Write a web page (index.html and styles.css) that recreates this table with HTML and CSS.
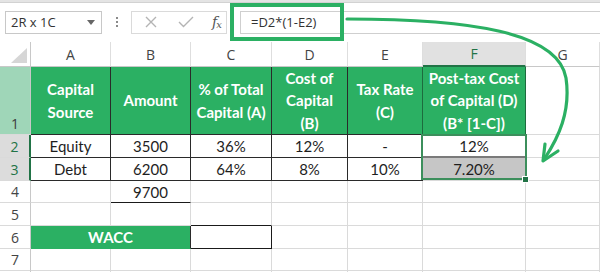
FILE: index.html
```html
<!DOCTYPE html>
<html lang="en">
<head>
<meta charset="utf-8">
<title>WACC worksheet</title>
<link rel="stylesheet" href="styles.css">
</head>
<body>
<div class="app">
  <div class="top-strip"></div>

  <div class="formula-bar">
    <div class="name-box">
      <span>2R x 1C</span>
      <svg class="caret" width="8" height="5" viewBox="0 0 8 5"><path d="M0 0h8L4 5z" fill="#666"/></svg>
    </div>
    <div class="grip"><i></i><i></i><i></i></div>
    <div class="fn-box">
      <svg class="fn-icon" width="14" height="12" viewBox="0 0 14 12"><path d="M2 1l10 10M12 1L2 11" stroke="#b4b4b4" stroke-width="1.4" fill="none"/></svg>
      <svg class="fn-icon" width="16" height="12" viewBox="0 0 16 12"><path d="M1 6l4.5 4.5L15 1" stroke="#b4b4b4" stroke-width="1.4" fill="none"/></svg>
      <span class="fx">f<sub>x</sub></span>
    </div>
    <div class="formula-input">=D2*(1-E2)</div>
  </div>

  <div class="grid">
    <!-- column headers -->
    <div class="c corner"><svg width="16" height="15" viewBox="0 0 16 15"><path d="M16 0v15H0z" fill="#d6d6d6"/></svg></div>
    <div class="c ch">A</div>
    <div class="c ch">B</div>
    <div class="c ch">C</div>
    <div class="c ch">D</div>
    <div class="c ch">E</div>
    <div class="c ch ch-sel">F</div>
    <div class="c ch">G</div>

    <!-- row 1 -->
    <div class="c rh rh-green">1</div>
    <div class="c hd dk">Capital<br>Source</div>
    <div class="c hd dk">Amount</div>
    <div class="c hd dk">% of Total<br>Capital (A)</div>
    <div class="c hd dk">Cost of<br>Capital<br>(B)</div>
    <div class="c hd dk">Tax Rate<br>(C)</div>
    <div class="c hd dk f-head">Post-tax Cost<br>of Capital (D)<br>(B* [1-C])</div>
    <div class="c"></div>

    <!-- row 2 -->
    <div class="c rh rh-sel">2</div>
    <div class="c dk">Equity</div>
    <div class="c dk">3500</div>
    <div class="c dk">36%</div>
    <div class="c dk">12%</div>
    <div class="c dk">-</div>
    <div class="c f-active">12%</div>
    <div class="c"></div>

    <!-- row 3 -->
    <div class="c rh rh-sel">3</div>
    <div class="c dk">Debt</div>
    <div class="c dk">6200</div>
    <div class="c dk">64%</div>
    <div class="c dk">8%</div>
    <div class="c dk">10%</div>
    <div class="c f-shade">7.20%</div>
    <div class="c"></div>

    <!-- row 4 -->
    <div class="c rh">4</div>
    <div class="c"></div>
    <div class="c total">9700</div>
    <div class="c"></div>
    <div class="c"></div>
    <div class="c"></div>
    <div class="c"></div>
    <div class="c"></div>

    <!-- row 5 -->
    <div class="c rh">5</div>
    <div class="c"></div>
    <div class="c"></div>
    <div class="c above-box"></div>
    <div class="c"></div>
    <div class="c"></div>
    <div class="c"></div>
    <div class="c"></div>

    <!-- row 6 -->
    <div class="c rh">6</div>
    <div class="c wacc">WACC</div>
    <div class="c box"></div>
    <div class="c"></div>
    <div class="c"></div>
    <div class="c"></div>
    <div class="c"></div>

    <!-- row 7 -->
    <div class="c rh">7</div>
    <div class="c"></div>
    <div class="c"></div>
    <div class="c"></div>
    <div class="c"></div>
    <div class="c"></div>
    <div class="c"></div>
    <div class="c"></div>

    <!-- row 8 (only its top edge is in view) -->
    <div class="c rh"></div>
    <div class="c"></div>
    <div class="c"></div>
    <div class="c"></div>
    <div class="c"></div>
    <div class="c"></div>
    <div class="c"></div>
    <div class="c"></div>
  </div>

  <div class="formula-callout"></div>
  <svg class="arrow" width="600" height="272" viewBox="0 0 600 272">
    <path d="M347 19 C 470 19, 558 32, 566 78 C 571 112, 558 138, 545 158" stroke="#2bb063" stroke-width="3.2" fill="none" stroke-linecap="round"/>
    <path d="M545 144 L543 161 L558 151" stroke="#2bb063" stroke-width="3.2" fill="none" stroke-linecap="round" stroke-linejoin="round"/>
  </svg>
</div>
</body>
</html>
```

FILE: styles.css
```css
html, body {
  margin: 0;
  padding: 0;
  background: #ffffff;
}

.app {
  position: relative;
  width: 600px;
  height: 272px;
  overflow: hidden;
  font-family: "Open Sans", "Liberation Sans", sans-serif;
}

.top-strip {
  height: 2px;
  background: #e4e4e4;
  border-bottom: 1px solid #d2d2d2;
}

/* formula bar */
.formula-bar {
  display: flex;
  align-items: center;
  height: 38px;
  padding: 0 0 0 5px;
  box-sizing: border-box;
}

.name-box {
  width: 97px;
  height: 23px;
  box-sizing: border-box;
  border: 1px solid #c8c8c8;
  display: flex;
  align-items: center;
  justify-content: space-between;
  padding: 0 6px 0 5px;
  font-size: 13px;
  color: #333;
}

.caret {
  margin-top: 1px;
}

.grip {
  width: 29px;
  display: flex;
  flex-direction: column;
  align-items: center;
  gap: 2px;
}

.grip i {
  width: 2px;
  height: 2px;
  background: #8a8a8a;
}

.fn-box {
  width: 96px;
  height: 23px;
  box-sizing: border-box;
  border: 1px solid #dadada;
  display: flex;
  align-items: center;
  padding-left: 12px;
  gap: 20px;
}

.fn-icon {
  flex: none;
}

.fx {
  font-family: "DejaVu Serif", "Liberation Serif", serif;
  font-style: italic;
  font-size: 14px;
  color: #555;
  margin-left: -2px;
  letter-spacing: -1px;
}

.fx sub {
  font-size: 10px;
  vertical-align: -1px;
}

.formula-input {
  margin-left: 13px;
  flex: 1;
  height: 23px;
  box-sizing: border-box;
  border: 1px solid #cfcfcf;
  border-right: none;
  display: flex;
  align-items: center;
  padding-left: 10px;
  font-size: 13px;
  color: #333;
}

/* worksheet grid */
.grid {
  display: grid;
  grid-template-columns: 31px 80px 80px 81px 76px 75px 103px 74px;
  grid-template-rows: 25px 68px 23px 23px 22px 23px 23px 22px 23px;
  margin-top: 1px;
}

.c {
  box-sizing: border-box;
  border-right: 1px solid #dadada;
  border-bottom: 1px solid #dadada;
  display: flex;
  align-items: center;
  justify-content: center;
  font-family: Lato, "Open Sans", sans-serif;
  font-size: 15px;
  color: #1e1e1e;
}

.corner {
  align-items: flex-end;
  justify-content: flex-end;
  padding: 0 3px 3px 0;
  border-right-color: #c8c8c8;
  border-bottom-color: #c8c8c8;
}

.ch {
  font-family: "Open Sans", sans-serif;
  font-size: 14px;
  color: #444;
  border-bottom-color: #c8c8c8;
  border-right-color: #dedede;
}

.ch-sel {
  background: #e1e1e1;
  color: #217346;
  border-bottom: 2px solid #217346;
}

.rh {
  font-family: "Open Sans", sans-serif;
  font-size: 14px;
  color: #444;
  align-items: flex-end;
  line-height: 20px;
  border-right-color: #c8c8c8;
}

.rh-green {
  background: #9fd6b8;
  color: #3c3c3c;
}

.rh-sel {
  background: #dcdcdc;
  color: #217346;
  border-right: 2px solid #217346;
}

.dk {
  border-right-color: #2a2a2a;
  border-bottom-color: #2a2a2a;
}

.hd {
  background: #2bb063;
  color: #ffffff;
  font-weight: 700;
  line-height: 22.5px;
  text-align: center;
}

/* F1 keeps a thin dark-green outline */
.f-head {
  position: relative;
  border-right-color: #1d6b3e;
  border-bottom-color: #1d6b3e;
}

.f-head::before {
  content: "";
  position: absolute;
  left: -1px;
  top: 0;
  bottom: -1px;
  width: 1px;
  background: #1d6b3e;
}

/* active cell of the F2:F3 selection; its frame spans both rows */
.f-active {
  position: relative;
  background: #ffffff;
  border-bottom: 2px solid #7a7a7a;
}

.f-active::after {
  content: "";
  position: absolute;
  left: -2px;
  top: -1px;
  right: -2px;
  height: 46px;
  border: 2px solid #3c8f5c;
  box-sizing: border-box;
  pointer-events: none;
  z-index: 2;
}

.f-active::before {
  content: "";
  position: absolute;
  right: -4px;
  top: 41px;
  width: 5px;
  height: 5px;
  background: #217346;
  border: 1px solid #ffffff;
  z-index: 3;
}

.f-shade {
  background: #c6c6c6;
}

.total {
  border-bottom-color: #1a1a1a;
}

.above-box {
  border-bottom-color: #1a1a1a;
}

.wacc {
  grid-column: span 2;
  background: #2bb063;
  color: #ffffff;
  font-weight: 700;
  border-right-color: #2a2a2a;
  border-bottom-color: #2bb063;
}

.box {
  border-right-color: #1a1a1a;
  border-bottom-color: #1a1a1a;
}

/* overlays */
.formula-callout {
  position: absolute;
  left: 230px;
  top: 3px;
  width: 114px;
  height: 38px;
  box-sizing: border-box;
  border: 4px solid #2bb063;
}

.arrow {
  position: absolute;
  left: 0;
  top: 0;
  pointer-events: none;
}
```
